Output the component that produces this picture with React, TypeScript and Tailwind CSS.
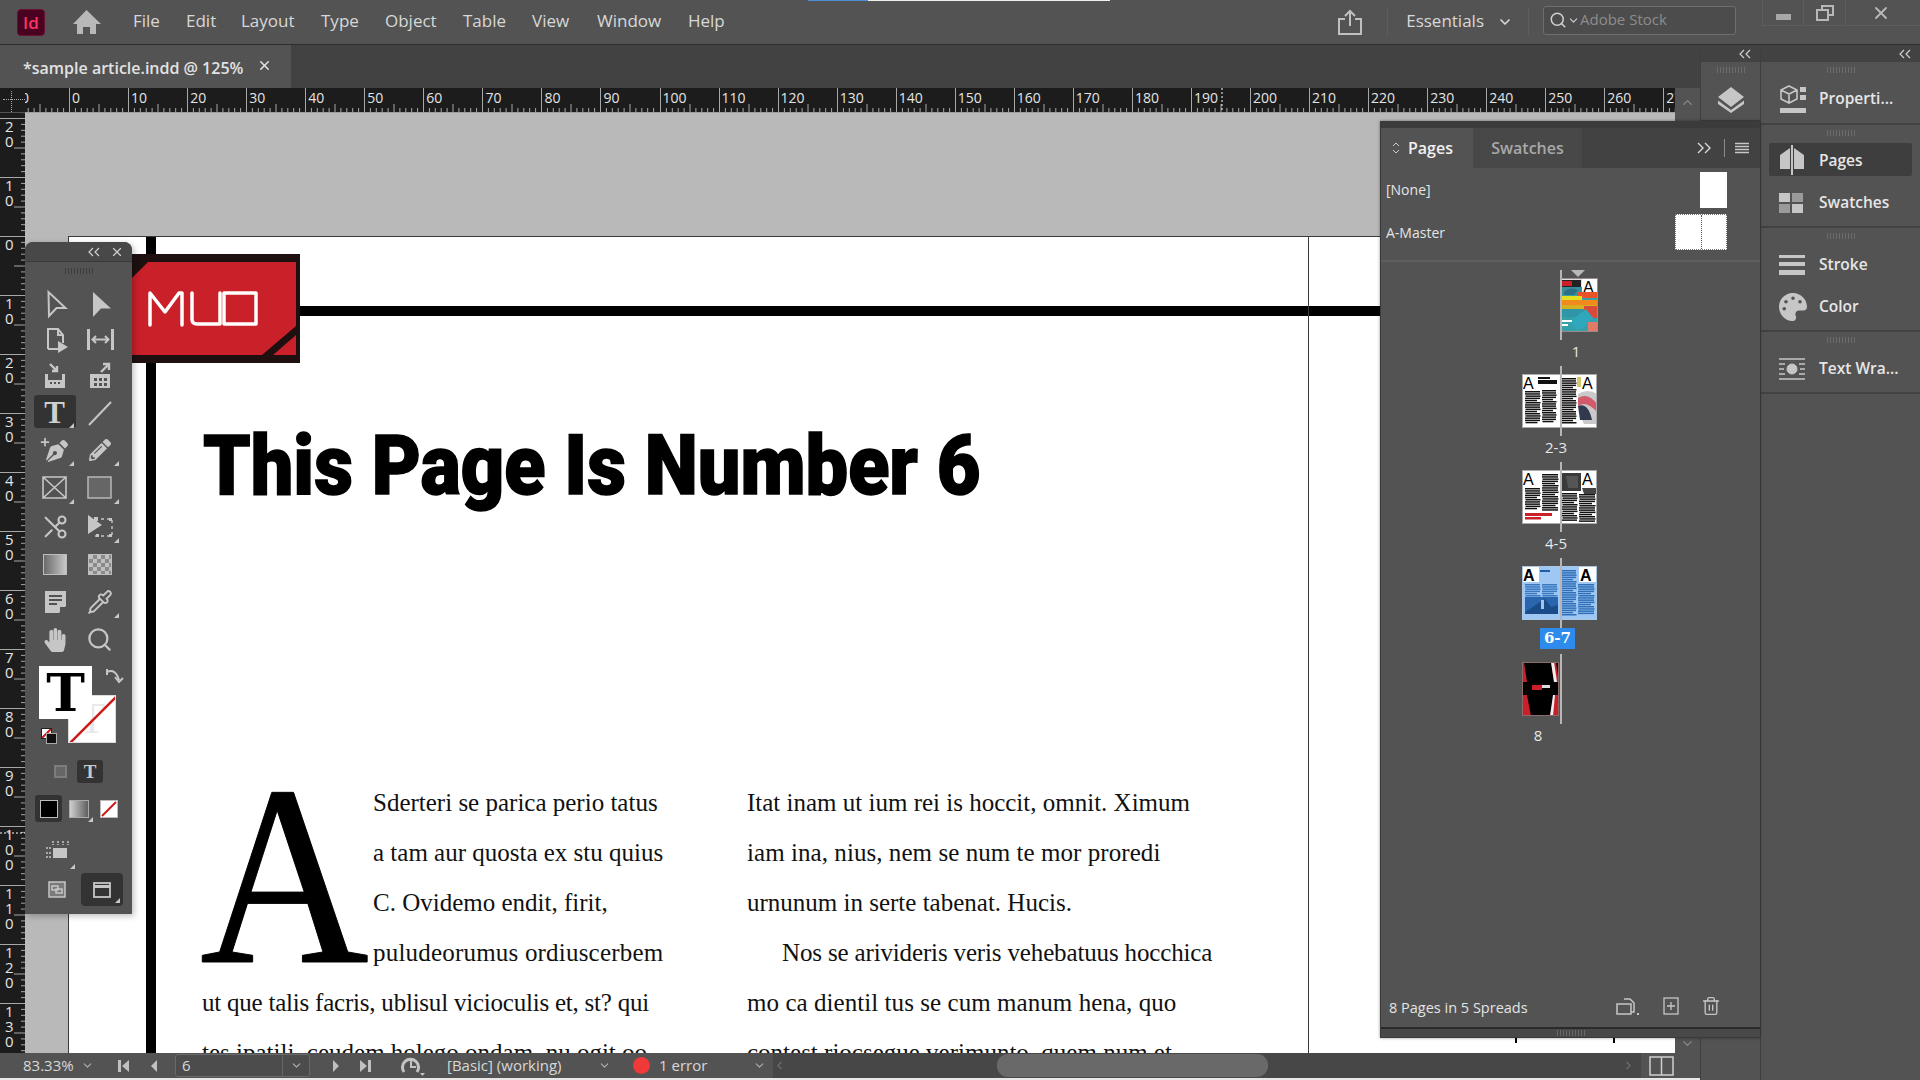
import React from "react";
import { Search, ChevronDown, ChevronUp, ChevronLeft, ChevronRight, Scissors, Pipette, Plus, Trash2, X } from "lucide-react";
import { FaPenNib, FaPencilAlt, FaHandPaper, FaPalette } from "react-icons/fa";

const Corner = () => (
  <svg width="5" height="5" viewBox="0 0 5 5" className="absolute right-[3px] bottom-[3px]"><path d="M5 0V5H0Z" fill="#c8c8c8" /></svg>
);

const HRulerSeg = ({ label, mark }: { label: string; mark?: number }) => (
  <div className="relative w-[59.05px] h-[24px] shrink-0 font-['Open_Sans',sans-serif] text-[14px] leading-[24px] text-[#e4e4e4] pl-[3px]">
    <svg width="60" height="24" className="absolute left-0 top-0">
      <line x1="0.5" y1="0" x2="0.5" y2="24" stroke="#a8a8a8" />
      {[1, 2, 3, 4, 5, 6, 7, 8, 9].map((i) => (
        <line key={i} x1={i * 5.9 + 0.5} y1={i === 5 ? 16 : 20} x2={i * 5.9 + 0.5} y2="24" stroke="#a8a8a8" />
      ))}
      {mark !== undefined && <line x1={mark} y1="0" x2={mark} y2="24" stroke="#fff" strokeDasharray="2 2" />}
    </svg>
    <span className="relative -top-[2px]">{label}</span>
  </div>
);

const VRulerSeg = ({ label, mark }: { label: string; mark?: number }) => (
  <div className="relative h-[59px] w-[25px] shrink-0 font-['Open_Sans',sans-serif] text-[15px] leading-[15px] text-[#e4e4e4] pl-[5px] pt-[1px]">
    <svg width="25" height="59" className="absolute left-0 top-0">
      <line x1="0" y1="0.5" x2="25" y2="0.5" stroke="#a8a8a8" />
      {[1, 2, 3, 4, 5, 6, 7, 8, 9].map((i) => (
        <line key={i} x1={i === 5 ? 14 : 21} y1={i * 5.9 + 0.5} x2="25" y2={i * 5.9 + 0.5} stroke="#a8a8a8" />
      ))}
      {mark !== undefined && <line x1="0" y1={mark} x2="25" y2={mark} stroke="#fff" strokeDasharray="2 2" />}
    </svg>
    <div className="relative flex flex-col">
      {label.split("").map((c, i) => (
        <span key={i}>{c}</span>
      ))}
    </div>
  </div>
);

const Ico = ({ d, fill, sw, children }: { d?: string; fill?: boolean; sw?: number; children?: React.ReactNode }) => (
  <svg width="30" height="30" viewBox="0 0 30 30" fill={fill ? "#c6c6c6" : "none"} stroke={fill ? "none" : "#c6c6c6"} strokeWidth={sw ?? 2}>
    {d && <path d={d} />}
    {children}
  </svg>
);

const Tool = ({ children, corner, active }: { children: React.ReactNode; corner?: boolean; active?: boolean }) => (
  <div className="relative w-[45px] h-full flex items-center justify-center">
    {active && <div className="absolute left-[2px] top-[0px] w-[42px] h-[33px] rounded-[3px] bg-[#333333]" />}
    <div className="relative flex items-center justify-center">{children}</div>
    {corner && <Corner />}
  </div>
);

const ToolRow = ({ h, children }: { h: string; children: React.ReactNode }) => (
  <div className={`flex pl-[7px] ${h}`}>{children}</div>
);

const ToolsPanel = () => (
  <div className="absolute left-0 top-[129px] w-[107px] h-[672px] bg-[#535353] rounded-t-[8px] flex flex-col shadow-[2px_2px_6px_rgba(0,0,0,0.25)]">
    <div className="h-[20px] shrink-0 bg-[#484848] rounded-t-[8px] border-b border-[#3a3a3a] flex items-center justify-end text-[#cfcfcf] pr-[8px] gap-[10px]">
      <svg width="12" height="10" viewBox="0 0 12 10" fill="none" stroke="#cfcfcf" strokeWidth="1.2"><path d="M5 1L1 5l4 4M11 1L7 5l4 4" /></svg>
      <X size={14} strokeWidth={2} color="#d0d0d0" />
    </div>
    <div className="h-[24px] shrink-0 flex justify-center pt-[6px]">
      <div className="w-[28px] h-[6px] bg-[repeating-linear-gradient(90deg,#3d3d3d_0,#3d3d3d_1px,transparent_1px,transparent_3px)]" />
    </div>
    <ToolRow h="h-[35px]">
      <Tool><Ico d="M8.5 3 L9 27 L16.5 19 L25.5 19 Z" /></Tool>
      <Tool><Ico fill d="M8 3 L8 28 L16 19.5 L26 19.5 Z" /></Tool>
    </ToolRow>
    <ToolRow h="h-[36px]">
      <Tool><Ico><path d="M8 25V5h10l5 6v8M8 25h11M18 5v6h5" /><path d="M18 17l10 6-10 6Z" fill="#c6c6c6" stroke="none" /></Ico></Tool>
      <Tool><Ico><path d="M3.5 5v21M27.5 5v21" strokeWidth="3" /><path d="M8 15.5h15M11 12l-3.5 3.5L11 19M20 12l3.5 3.5L20 19" /></Ico></Tool>
    </ToolRow>
    <ToolRow h="h-[38px]">
      <Tool><Ico><path d="M5 13v14h20V13h-3v6H8v-6Z" fill="#c6c6c6" stroke="none" /><path d="M10 21h2v2h-2zM14 21h2v2h-2zM18 21h2v2h-2z" fill="#535353" stroke="none" /><path d="M10 3l7 7M17 5v5h-5" strokeWidth="2.4" /></Ico></Tool>
      <Tool><Ico><path d="M5 13v14h20V13h-3v-0H8Z" fill="#c6c6c6" stroke="none" /><path d="M9 17h3v3H9zM14 17h3v3h-3zM19 17h3v3h-3zM9 22h3v3H9zM14 22h3v3h-3zM19 22h3v3h-3z" fill="#535353" stroke="none" /><path d="M16 11l8-8M18 3h6v6" strokeWidth="2.4" /></Ico></Tool>
    </ToolRow>
    <ToolRow h="h-[36px]">
      <Tool active corner><span className="font-['Liberation_Serif',serif] font-bold text-[31px] leading-[30px] text-[#d0d0d0]">T</span></Tool>
      <Tool><Ico d="M4 27 L26 4" /></Tool>
    </ToolRow>
    <ToolRow h="h-[38px]">
      <Tool corner><div className="relative w-[30px] h-[30px] flex items-center justify-center"><FaPenNib size={22} color="#c6c6c6" className="ml-[5px] mt-[2px]" /><Plus size={12} strokeWidth={3.5} color="#c6c6c6" className="absolute -left-[1px] top-[1px]" /></div></Tool>
      <Tool corner><FaPencilAlt size={22} color="#c6c6c6" /></Tool>
    </ToolRow>
    <ToolRow h="h-[38px]">
      <Tool corner><Ico sw={1.6} d="M3 4h23v21H3ZM3 4l23 21M26 4L3 25" /></Tool>
      <Tool corner><svg width="26" height="24" viewBox="0 0 26 24"><rect x="1" y="1" width="23" height="21" fill="#666" stroke="#b8b8b8" strokeWidth="1.5" /></svg></Tool>
    </ToolRow>
    <ToolRow h="h-[39px]">
      <Tool><Scissors size={28} color="#c6c6c6" strokeWidth={1.8} className="scale-x-[-1]" /></Tool>
      <Tool corner><Ico fill><path d="M3 3l14 10L3 22Z" /><path d="M10 7h17v17H10" fill="none" stroke="#c6c6c6" strokeWidth="1.4" strokeDasharray="3 3" /><path d="M9 5h4v4H9zM24 6h3v3h-3zM24 22h3v3h-3zM11 22h3v3h-3z" /></Ico></Tool>
    </ToolRow>
    <ToolRow h="h-[37px]">
      <Tool><div className="w-[24px] h-[21px] border border-[#bdbdbd] bg-[linear-gradient(90deg,#6a6a6a,#c8c8c8)]" /></Tool>
      <Tool><div className="w-[24px] h-[21px] border border-[#bdbdbd] bg-[conic-gradient(#8a8a8a_25%,#c0c0c0_0_50%,#8a8a8a_0_75%,#c0c0c0_0)] bg-[length:8px_8px]" /></Tool>
    </ToolRow>
    <ToolRow h="h-[38px]">
      <Tool><Ico fill><path d="M5 4h21v15l-7 7H5Z" /><path d="M9 9h13M9 13h13M9 17h8" stroke="#535353" strokeWidth="2" /><path d="M20 26l6-6h-6Z" fill="#535353" /></Ico></Tool>
      <Tool corner><Pipette size={26} color="#c6c6c6" strokeWidth={1.8} /></Tool>
    </ToolRow>
    <ToolRow h="h-[37px]">
      <Tool><FaHandPaper size={24} color="#c6c6c6" /></Tool>
      <Tool><Search size={27} color="#c6c6c6" strokeWidth={2} /></Tool>
    </ToolRow>
    <div className="relative h-[95px] shrink-0">
      <div className="absolute left-[43px] top-[37px] w-[48px] h-[48px] bg-white border border-[#dcdcdc] overflow-hidden flex items-center justify-center">
        <span className="font-['Liberation_Serif',serif] text-[44px] leading-[44px] text-[#e8e8e8]">T</span>
        <svg width="48" height="48" className="absolute left-0 top-0"><line x1="1" y1="47" x2="47" y2="1" stroke="#cc1a1a" strokeWidth="2.5" /></svg>
      </div>
      <div className="absolute left-[14px] top-[8px] w-[53px] h-[53px] bg-white flex items-center justify-center">
        <span className="font-['DejaVu_Serif',serif] font-bold text-[52px] leading-[50px] text-black">T</span>
      </div>
      <svg width="18" height="16" viewBox="0 0 18 16" fill="none" stroke="#c6c6c6" strokeWidth="2" className="absolute left-[81px] top-[10px]"><path d="M1 4c6-3 10 1 12 8M1 1v6M9 9l4 5 4-4" /></svg>
      <div className="absolute left-[16px] top-[70px] w-[11px] h-[11px] bg-[#fff] border border-[#222]"><svg width="9" height="9"><line x1="0" y1="9" x2="9" y2="0" stroke="#cc1a1a" strokeWidth="2" /></svg></div>
      <div className="absolute left-[21px] top-[75px] w-[11px] h-[11px] bg-[#111] border border-[#aaa]" />
    </div>
    <div className="h-[37px] shrink-0 flex items-center pl-[29px] gap-[10px]">
      <div className="w-[13px] h-[13px] border-2 border-[#7c7c7c] bg-[#666]" />
      <div className="w-[26px] h-[23px] rounded-[3px] bg-[#333] flex items-center justify-center"><span className="font-['Liberation_Serif',serif] font-bold text-[19px] leading-[19px] text-[#c8c8c8]">T</span></div>
    </div>
    <div className="h-[37px] shrink-0 flex items-center pl-[10px]">
      <div className="w-[27px] h-[27px] rounded-[3px] bg-[#333] flex items-center justify-center"><div className="w-[18px] h-[18px] bg-black border border-[#bdbdbd]" /></div>
      <div className="relative ml-[7px] w-[20px] h-[18px] border border-[#aaa] bg-[linear-gradient(90deg,#cfcfcf,#5f5f5f)]"><svg width="5" height="5" viewBox="0 0 5 5" className="absolute -right-[5px] -bottom-[5px]"><path d="M5 0V5H0Z" fill="#c8c8c8" /></svg></div>
      <div className="ml-[11px] w-[18px] h-[18px] bg-white border border-[#bbb]"><svg width="16" height="16"><line x1="1" y1="15" x2="15" y2="1" stroke="#cc1a1a" strokeWidth="2" /></svg></div>
    </div>
    <div className="relative h-[46px] shrink-0 flex items-center pl-[20px]">
      <svg width="24" height="20" viewBox="0 0 24 20"><path d="M8 8h14v10H8Z" fill="#c6c6c6" /><path d="M1 8h5M1 13h5M1 17h5M8 1v4M13 1v4M18 1v4M23 1v4" stroke="#c6c6c6" strokeWidth="1.5" strokeDasharray="2 1" /></svg>
      <svg width="5" height="5" viewBox="0 0 5 5" className="absolute left-[45px] bottom-[4px]"><path d="M5 0V5H0Z" fill="#c8c8c8" /></svg>
    </div>
    <div className="h-[33px] shrink-0 flex items-center pl-[23px] gap-[15px]">
      <svg width="18" height="17" viewBox="0 0 18 17" fill="none" stroke="#c6c6c6" strokeWidth="1.5"><rect x="1" y="1" width="16" height="15" fill="#7a7a7a" /><rect x="4" y="5" width="6" height="4" /><rect x="8" y="8" width="6" height="4" /></svg>
      <div className="relative w-[42px] h-[33px] rounded-[4px] bg-[#333] flex items-center justify-center">
        <svg width="18" height="16" viewBox="0 0 18 16" fill="none" stroke="#c6c6c6" strokeWidth="1.8"><rect x="1" y="1" width="16" height="14" /><path d="M1 4.5h16" strokeWidth="3" /></svg>
        <Corner />
      </div>
    </div>
  </div>
);

const Bars = ({ x, y, w, n, color = "#111", gap = 2.2 }: { x: number; y: number; w: number; n: number; color?: string; gap?: number }) => (
  <g>
    {Array.from({ length: n }).map((_, i) => (
      <rect key={i} x={x + (i % 3 === 2 ? 0.5 : 0)} y={y + i * gap} width={w - (i % 5 === 4 ? 3 : 0)} height={1.5} fill={color} />
    ))}
  </g>
);

const PA = ({ x, y, bold }: { x: number; y: number; bold?: boolean }) => (
  <text x={x} y={y} fontFamily="'Liberation Sans',sans-serif" fontWeight={bold ? 700 : 400} fontSize="16" fill="#000">A</text>
);

const Thumb1 = () => (
  <svg width="38" height="54" viewBox="0 0 38 54">
    <rect width="38" height="54" fill="#36a0a8" />
    <rect x="22" y="0" width="16" height="15" fill="#fff" />
    <rect x="0" y="0" width="22" height="9" fill="#ddd" /><rect x="0" y="2" width="21" height="7" fill="#222" /><rect x="1" y="3" width="11" height="5" fill="#c9202a" />
    <PA x={23} y={15} />
    <rect x="0" y="9" width="22" height="8" fill="#3a8e9c" /><path d="M4 14Q10 8 18 12L14 17H4Z" fill="#2d6f86" />
    <rect x="18" y="14" width="20" height="6" fill="#e8532a" />
    <rect x="2" y="18" width="20" height="4" fill="#e3e01f" /><rect x="0" y="22" width="38" height="5" fill="#f18a1c" />
    <rect x="0" y="27" width="38" height="4" fill="#d7b020" /><rect x="24" y="28" width="14" height="12" fill="#d94a3a" />
    <rect x="0" y="31" width="24" height="8" fill="#2f96a8" />
    <rect x="12" y="36" width="20" height="12" fill="#2fa7bd" transform="rotate(-40 22 42)" />
    <rect x="0" y="42" width="12" height="2" fill="#fff" /><rect x="0" y="46" width="8" height="2" fill="#fff" />
    <rect x="28" y="44" width="10" height="10" fill="#e27a6a" />
    <rect x="0.5" y="0.5" width="37" height="53" fill="none" stroke="#9a8a8a" />
  </svg>
);

const Thumb23 = () => (
  <svg width="75" height="54" viewBox="0 0 75 54">
    <rect width="75" height="54" fill="#fff" />
    <PA x={1} y={15} />
    <rect x="16" y="3" width="12" height="2" fill="#111" /><rect x="16" y="6" width="19" height="4" fill="#111" />
    <Bars x={3} y={17} w={15} n={15} /><Bars x={20} y={16} w={14} n={15} />
    <Bars x={39} y={4} w={15} n={21} />
    <PA x={60} y={15} />
    <rect x="55" y="3" width="4" height="10" fill="#d3c86a" />
    <path d="M56 20Q66 14 75 20V50H62Q56 40 56 20Z" fill="#c9c9c9" /><path d="M56 24Q66 18 75 30V38Q64 26 56 32Z" fill="#d25a6a" /><path d="M56 32Q66 28 70 46H58Z" fill="#32384e" />
    <rect x="0.5" y="0.5" width="74" height="53" fill="none" stroke="#aaa" />
  </svg>
);

const Thumb45 = () => (
  <svg width="75" height="54" viewBox="0 0 75 54">
    <rect width="75" height="54" fill="#fff" />
    <PA x={1} y={15} />
    <Bars x={20} y={4} w={16} n={17} /><Bars x={3} y={18} w={15} n={10} />
    <rect x="3" y="43" width="27" height="3" fill="#c9202a" /><rect x="3" y="47" width="16" height="2.5" fill="#c9202a" />
    <path d="M38 3h21v18H40Z" fill="#3a3a3a" /><path d="M44 6h12v12H46Z" fill="#555" /><path d="M60 18h14v6H62Z" fill="#444" />
    <PA x={60} y={15} />
    <Bars x={40} y={23} w={15} n={13} /><Bars x={57} y={24} w={16} n={13} />
    <rect x="0.5" y="0.5" width="74" height="53" fill="none" stroke="#aaa" />
  </svg>
);

const Thumb67 = () => (
  <svg width="75" height="54" viewBox="0 0 75 54">
    <rect width="75" height="54" fill="#9ec7f3" />
    <rect x="0" y="0" width="17" height="16" fill="#fff" /><PA x={1} y={15} bold />
    <rect x="57" y="0" width="17" height="16" fill="#fff" /><PA x={58} y={15} bold />
    <rect x="18" y="4" width="10" height="2" fill="#1f5fa8" />
    <Bars x={3} y={18} w={15} n={6} color="#3a78c0" /><Bars x={20} y={18} w={15} n={6} color="#3a78c0" />
    <rect x="3" y="31" width="33" height="17" fill="#2a66ad" /><path d="M3 46L18 36l5-3 6 8 7-2v9H3Z" fill="#1b4c8a" /><rect x="19" y="34" width="3" height="9" fill="#a0c4ea" />
    <Bars x={39} y={4} w={15} n={21} color="#2f6fb8" /><Bars x={56} y={18} w={16} n={14} color="#2f6fb8" />
    <rect x="0.5" y="0.5" width="74" height="53" fill="none" stroke="#a9c7e8" />
  </svg>
);

const Thumb8 = () => (
  <svg width="37" height="54" viewBox="0 0 37 54">
    <rect width="37" height="54" fill="#000" />
    <path d="M0 0h2l3 20H0ZM0 33h5l4 21H0Z" fill="#c9202a" />
    <path d="M29 0h5l3 20h-5ZM32 33h5v21h-9Z" fill="#c9202a" />
    <path d="M29 0h3l3 20h-3ZM28 54l3-21h2l-2 21Z" fill="#eee" />
    <rect x="10" y="23" width="10" height="5" fill="#c9202a" /><rect x="20" y="23" width="8" height="3" fill="#ddd" />
    <rect x="0.5" y="0.5" width="36" height="53" fill="none" stroke="#8a6a6a" />
  </svg>
);

const Spread = ({ children, pad, label, labelPad, active, first }: { children: React.ReactNode; pad: string; label: string; labelPad: string; active?: boolean; first?: boolean }) => (
  <div className="relative h-[96px] w-full shrink-0">
    {first && <div className="absolute left-[190px] top-0 w-0 h-0 border-l-[7px] border-r-[7px] border-t-[7px] border-l-transparent border-r-transparent border-t-[#b8b8b8]" />}
    <div className={`absolute top-[8px] ${pad}`}>{children}</div>
    <div className="absolute top-0 left-[179px] w-[2px] h-[70px] bg-[#b6b6b6]" />
    <div className={`absolute ${labelPad} h-[21px] leading-[21px] text-center z-10 ${active ? "top-[70px] bg-[#2d8ceb] text-white font-bold text-[15px] w-[35px] font-['DejaVu_Serif',serif]" : "top-[71px] text-[15px] text-[#e8e8e8] w-[40px]"}`}>{label}</div>
  </div>
);

const PagesPanel = () => (
  <div className="absolute left-[1380px] top-[8px] w-[380px] h-[917px] flex flex-col bg-[#535353] border-l border-[#3a3a3a] shadow-[0_0_3px_rgba(0,0,0,0.4)] font-['Open_Sans',sans-serif] text-[#e4e4e4] z-20">
    <div className="h-[7px] bg-[#3b3b3b] shrink-0" />
    <div className="h-[40px] shrink-0 flex bg-[#424242] items-stretch">
      <div className="w-[92px] bg-[#535353] flex items-center pl-[11px] gap-[8px] font-semibold text-[16px] text-[#f0f0f0]">
        <svg width="8" height="14" viewBox="0 0 8 14" fill="none" stroke="#cfcfcf"><path d="M1 5l3-3 3 3M1 9l3 3 3-3" /></svg>
        Pages
      </div>
      <div className="w-[109px] bg-[#484848] flex items-center justify-center font-semibold text-[16px] text-[#a8a8a8]">Swatches</div>
      <div className="flex-1 flex items-center justify-end pr-[11px]">
        <svg width="14" height="12" viewBox="0 0 14 12" fill="none" stroke="#d8d8d8" strokeWidth="1.4"><path d="M1 1l5 5-5 5M8 1l5 5-5 5" /></svg>
        <div className="w-px h-[18px] bg-[#8a8a8a] ml-[13px] mr-[10px]" />
        <svg width="14" height="12" viewBox="0 0 14 12" stroke="#c8c8c8" strokeWidth="1.4"><path d="M0 1.5h14M0 4.5h14M0 7.5h14M0 10.5h14" /></svg>
      </div>
    </div>
    <div className="h-[94px] shrink-0 relative border-b-2 border-[#5f5f5f]">
      <div className="flex items-center justify-between h-[42px] pl-[5px] pr-[33px]">
        <span className="text-[14px]">[None]</span>
        <div className="w-[27px] h-[36px] bg-white mt-[1px]" />
      </div>
      <div className="flex items-center justify-between h-[44px] pl-[5px] pr-[33px]">
        <span className="text-[14px]">A-Master</span>
        <div className="w-[52px] h-[36px] bg-white border border-dotted border-[#777] flex justify-center">
          <div className="w-px h-full border-l border-dotted border-[#555]" />
        </div>
      </div>
    </div>
    <div className="flex flex-col pt-[8px] flex-1">
      <Spread first pad="left-[179px]" label="1" labelPad="left-[175px]"><Thumb1 /></Spread>
      <Spread pad="left-[141px]" label="2-3" labelPad="left-[155px]"><Thumb23 /></Spread>
      <Spread pad="left-[141px]" label="4-5" labelPad="left-[155px]"><Thumb45 /></Spread>
      <Spread active pad="left-[141px]" label="6-7" labelPad="left-[159px]"><Thumb67 /></Spread>
      <Spread pad="left-[141px]" label="8" labelPad="left-[137px]"><Thumb8 /></Spread>
    </div>
    <div className="h-[42px] shrink-0 flex items-center pl-[8px] text-[14.5px] text-[#e4e4e4]">
      <span className="mt-[4px]">8 Pages in 5 Spreads</span>
      <svg width="26" height="20" viewBox="0 0 26 20" fill="none" stroke="#c6c6c6" strokeWidth="1.5" className="ml-[88px]"><path d="M8 3h6l4 4v9h-3M1 8h10l4 0v10H1Z" /><path d="M21 18h2" strokeWidth="2" /></svg>
      <svg width="16" height="18" viewBox="0 0 16 18" fill="none" stroke="#c6c6c6" strokeWidth="1.3" className="ml-[21px]"><rect x="1" y="1" width="14" height="16" /><path d="M8 5v8M4 9h8" /></svg>
      <Trash2 size={20} color="#c6c6c6" strokeWidth={1.6} className="ml-[22px]" />
    </div>
    <div className="h-[11px] shrink-0 bg-[#484848] border-t-2 border-[#2a2a2a] border-b border-b-[#3a3a3a] flex justify-center items-center">
      <div className="w-[28px] h-[6px] bg-[repeating-linear-gradient(90deg,#6a6a6a_0,#6a6a6a_1px,transparent_1px,transparent_3px)]" />
    </div>
  </div>
);

const Grip = () => (
  <div className="h-[16px] flex justify-center items-center shrink-0">
    <div className="w-[28px] h-[6px] bg-[repeating-linear-gradient(90deg,#6c6c6c_0,#6c6c6c_1px,transparent_1px,transparent_3px)]" />
  </div>
);

const DockItem = ({ icon, label, h, active }: { icon: React.ReactNode; label: string; h: string; active?: boolean }) => (
  <div className={`flex items-center ${h} mx-[8px] shrink-0 rounded-[2px] ${active ? "bg-[#3e3e3e] mt-[2px]" : ""}`}>
    <div className="w-[50px] pl-[10px] flex items-center shrink-0">{icon}</div>
    <span className={`font-semibold text-[15.5px] text-[#e6e6e6] whitespace-nowrap ${active ? "mt-[3px]" : ""}`}>{label}</span>
  </div>
);

const Group = ({ h, children }: { h: string; children: React.ReactNode }) => (
  <div className={`${h} shrink-0 border-b-2 border-[#424242] flex flex-col`}>
    <Grip />
    {children}
  </div>
);

export default function App() {
  const hLabels = ["10", ...Array.from({ length: 28 }, (_, i) => String(i * 10))];
  const vLabels = ["30", "20", "10", "0", "10", "20", "30", "40", "50", "60", "70", "80", "90", "100", "110", "120", "130", "140"];
  return (
    <div className="w-[1920px] h-[1080px] flex flex-col overflow-hidden bg-[#535353] font-['Open_Sans',sans-serif] relative">
      {/* title bar */}
      <div className="relative h-[45px] shrink-0 bg-[#535353] border-b border-[#2e2e2e] flex items-center">
        <div className="absolute left-[808px] top-0 w-[60px] h-[1px] bg-[#4b8fd6]" />
        <div className="absolute left-[868px] top-0 w-[242px] h-[1px] bg-[#f0f0f0]" />
        <div className="ml-[17px] w-[28px] h-[27px] rounded-[4px] bg-[#49021f] border border-[#6a1030] flex items-center justify-center text-[#ff3366] text-[17px] font-semibold leading-none">Id</div>
        <svg width="28" height="24" viewBox="0 0 28 24" fill="#b8b8b8" className="ml-[28px]"><path d="M13.5 0L0 14h4v10h6v-7h7v7h6V14h5Z" /></svg>
        <div className="absolute left-0 -top-[1px] h-[44px] flex items-center text-[17px] text-[#d8d8d8]">
          <span className="ml-[133px] w-[53px]">File</span>
          <span className="w-[55px]">Edit</span>
          <span className="w-[80px]">Layout</span>
          <span className="w-[64px]">Type</span>
          <span className="w-[78px]">Object</span>
          <span className="w-[69px]">Table</span>
          <span className="w-[65px]">View</span>
          <span className="w-[91px]">Window</span>
          <span>Help</span>
        </div>
        <div className="ml-auto flex items-center h-[44px]">
          <svg width="24" height="26" viewBox="0 0 24 26" fill="none" stroke="#c0c0c0" strokeWidth="2"><path d="M7 10H1v15h22V10h-6M12 17V2M7 7l5-5 5 5" /></svg>
          <div className="w-px h-[28px] bg-[#5e5e5e] ml-[25px]" />
          <span className="ml-[18px] text-[17px] text-[#d8d8d8] -mt-[3px]">Essentials</span>
          <ChevronDown size={16} color="#d8d8d8" strokeWidth={2.5} className="ml-[13px]" />
          <div className="w-px h-[28px] bg-[#5e5e5e] ml-[15px]" />
          <div className="ml-[14px] w-[193px] h-[29px] rounded-[3px] bg-[#4c4c4c] border border-[#6e6e6e] flex items-center pl-[5px] text-[15px] text-[#8c8c8c] -mt-[4px]">
            <Search size={18} color="#cfcfcf" strokeWidth={2} />
            <ChevronDown size={13} color="#cfcfcf" strokeWidth={2} />
            <span className="-mt-[2px]">Adobe Stock</span>
          </div>
          <div className="ml-[26px] w-[158px] h-[26px] self-start border-l border-b border-[#5d5d5d] flex items-center text-[#b8b8b8]">
            <div className="w-[41px] h-full border-r border-[#5d5d5d] flex items-end justify-center pb-[5px]"><div className="w-[15px] h-[6px] bg-[#a8a8a8]" /></div>
            <div className="w-[42px] h-full border-r border-[#5d5d5d] flex items-center justify-center">
              <svg width="18" height="16" viewBox="0 0 18 16" fill="none" stroke="#b8b8b8" strokeWidth="2"><rect x="1" y="5" width="11" height="10" /><path d="M6 5V1h11v9h-5" /></svg>
            </div>
            <div className="flex-1 flex justify-center pr-[4px]"><X size={20} strokeWidth={2.2} color="#b8b8b8" /></div>
          </div>
        </div>
      </div>

      <div className="flex flex-1 min-h-0">
        {/* left workspace */}
        <div className="w-[1700px] shrink-0 flex flex-col">
          <div className="h-[43px] shrink-0 bg-[#424242] flex">
            <div className="w-[291px] bg-[#535353] flex items-center pl-[23px] pt-[2px] text-[16px] font-semibold text-[#e2e2e2]">
              *sample article.indd @ 125%
              <X size={15} strokeWidth={2.5} color="#e2e2e2" className="ml-[14px] -mt-[5px]" />
            </div>
            <div className="flex-1" />
          </div>
          <div className="h-[25px] shrink-0 flex">
            <div className="w-[25px] h-[24px] bg-[#1c1c1c] relative shrink-0">
              <div className="absolute left-[3px] top-[11px] w-[22px] border-t border-dotted border-[#aaa]" />
              <div className="absolute left-[11px] top-[3px] h-[21px] border-l border-dotted border-[#aaa]" />
            </div>
            <div className="w-[1650px] h-[25px] bg-[#1c1c1c] border-b border-[#a0a0a0] overflow-hidden shrink-0">
              <div className="flex -ml-[15px]">
                {hLabels.map((l, i) => (
                  <HRulerSeg key={i} label={l} mark={l === "190" ? 31 : undefined} />
                ))}
              </div>
            </div>
            <div className="flex-1 flex justify-center pt-[7px]"><ChevronUp size={15} color="#8a8a8a" /></div>
          </div>
          <div className="flex-1 flex min-h-0 relative">
            <div className="w-[25px] shrink-0 bg-[#1c1c1c] overflow-hidden">
              <div className="-mt-[54px] flex flex-col">
                {vLabels.map((l, i) => (
                  <VRulerSeg key={i} label={l} mark={i === 13 ? 7 : undefined} />
                ))}
              </div>
            </div>
            {/* pasteboard */}
            <div className="w-[1650px] shrink-0 bg-[#b9b9b9] overflow-hidden pt-[123px] pl-[43px]">
              <div className="relative w-[1700px] h-[1000px] bg-white border-t border-l border-[#3a3a3a]">
                <div className="absolute left-[77px] top-0 w-[10px] h-full bg-black" />
                <div className="absolute left-[1239px] top-0 w-px h-full bg-[#3a3a3a] z-10" />
                <div className="absolute left-[1446px] top-[798px] w-[2px] h-[8px] bg-black" />
                <div className="absolute left-[1544px] top-[798px] w-[2px] h-[8px] bg-black" />
                <div className="relative flex pt-[17px] pl-[63px]">
                  <svg width="168" height="109" viewBox="0 0 168 109" className="shrink-0">
                    <rect width="168" height="109" fill="#1e1010" />
                    <path d="M0 24L16 8H164V72L130 101H0Z" fill="#c9202a" />
                    <path d="M164 81V101H141Z" fill="#c9202a" />
                    <path d="M18 71V39L33 58L47 39H50V71M60 39V65Q60 70 65 70H88V39M92 39H124V70H92Z" fill="none" stroke="#fff" strokeWidth="3.5" strokeLinejoin="round" strokeLinecap="round" />
                  </svg>
                  <div className="flex-1 h-[10px] bg-black mt-[52px]" />
                </div>
                <div className="pl-[134px] pt-[53px] h-[415px]">
                  <div className="font-['Roboto',sans-serif] font-black text-[84px] leading-[100px] text-black whitespace-nowrap origin-left scale-x-[0.9] [-webkit-text-stroke:1.5px_#000]">This Page Is Number 6</div>
                </div>
                <div className="flex pl-[133px] font-['Liberation_Serif',serif] text-[25px] leading-[50px] text-[#111]">
                  <div className="w-[545px] shrink-0">
                    <div className="float-left w-[171px] h-[200px] text-[257px] leading-[200px] text-black"><div className="relative -top-[2px] -left-[2px] origin-left scale-x-[0.91] [-webkit-text-stroke:1px_#000]">A</div></div>
                    <div className="whitespace-nowrap">Sderteri se parica perio tatus</div>
                    <div className="whitespace-nowrap">a tam aur quosta ex stu quius</div>
                    <div className="whitespace-nowrap">C. Ovidemo endit, firit,</div>
                    <div className="whitespace-nowrap tracking-[0.2px]">puludeorumus ordiuscerbem</div>
                    <div className="clear-both whitespace-nowrap tracking-[-0.22px]">ut que talis facris, ublisul vicioculis et, st? qui</div>
                    <div className="whitespace-nowrap">tes ipatili, ceudem holego ondam, nu ogit oo</div>
                  </div>
                  <div className="w-[500px]">
                    <div className="whitespace-nowrap">Itat inam ut ium rei is hoccit, omnit. Ximum</div>
                    <div className="whitespace-nowrap tracking-[0.06px]">iam ina, nius, nem se num te mor proredi</div>
                    <div className="whitespace-nowrap">urnunum in serte tabenat. Hucis.</div>
                    <div className="whitespace-nowrap pl-[35px] tracking-[-0.15px]">Nos se arivideris veris vehebatuus hocchica</div>
                    <div className="whitespace-nowrap tracking-[0.06px]">mo ca dientil tus se cum manum hena, quo</div>
                    <div className="whitespace-nowrap">contest riocsegue verimunto, quem num et</div>
                  </div>
                </div>
              </div>
            </div>
            <div className="flex-1 flex flex-col justify-end items-center pb-[2px]"><ChevronDown size={15} color="#8a8a8a" /></div>
            <ToolsPanelWrap />
            <PagesPanel />
          </div>
          {/* status bar */}
          <div className="h-[25px] shrink-0 bg-[#535353] flex items-center text-[15px] text-[#d8d8d8]">
            <span className="ml-[23px] w-[58px]">83.33%</span>
            <ChevronDown size={13} color="#b0b0b0" />
            <svg width="14" height="14" viewBox="0 0 14 14" fill="#c0c0c0" className="ml-[23px]"><path d="M1 1h3v12H1ZM12 1v12L5 7Z" /></svg>
            <svg width="8" height="14" viewBox="0 0 8 14" fill="#c0c0c0" className="ml-[19px]"><path d="M7 1v12L1 7Z" /></svg>
            <div className="ml-[17px] w-[135px] h-[23px] rounded-[3px] bg-[#4c4c4c] border border-[#6a6a6a] flex items-center pl-[6px] shrink-0">
              <span className="flex-1">6</span>
              <div className="w-[27px] h-full border-l border-[#666] flex items-center justify-center"><ChevronDown size={13} color="#b0b0b0" /></div>
            </div>
            <svg width="8" height="14" viewBox="0 0 8 14" fill="#c0c0c0" className="ml-[22px]"><path d="M1 1v12l6-6Z" /></svg>
            <svg width="14" height="14" viewBox="0 0 14 14" fill="#c0c0c0" className="ml-[18px]"><path d="M2 1v12l7-6ZM10 1h3v12h-3Z" /></svg>
            <svg width="26" height="22" viewBox="0 0 26 22" fill="none" stroke="#c4c4c4" className="ml-[29px]"><path d="M3 17A8 8 0 1 1 16 17" strokeWidth="3" /><path d="M10 5v7h5" strokeWidth="2" /><path d="M19 18h5l-2.5 3Z" fill="#c4c4c4" stroke="none" /></svg>
            <span className="ml-[20px] w-[151px] whitespace-nowrap">[Basic] (working)</span>
            <ChevronDown size={13} color="#b0b0b0" />
            <div className="ml-[22px] w-[17px] h-[17px] rounded-full bg-[#f03a3a]" />
            <span className="ml-[9px] w-[94px]">1 error</span>
            <ChevronDown size={13} color="#b0b0b0" />
            <div className="ml-[7px] flex-1 h-full bg-[#474747] flex items-center min-w-0">
              <ChevronLeft size={13} color="#6f6f6f" />
              <div className="ml-[211px] w-[271px] h-[23px] rounded-[11px] bg-[#696969]" />
              <div className="flex-1" />
              <ChevronRight size={13} color="#6f6f6f" />
              <div className="w-[6px]" />
            </div>
            <div className="w-[59px] shrink-0 flex items-center pl-[8px]">
              <svg width="25" height="20" viewBox="0 0 25 20" fill="none" stroke="#cfcfcf" strokeWidth="1.5"><rect x="1" y="1" width="23" height="18" /><path d="M12.5 1v18" /></svg>
            </div>
          </div>
          <div className="h-[2px] shrink-0 bg-[#e8e8e8]" />
        </div>

        {/* narrow dock */}
        <div className="w-[60px] shrink-0 border-l border-[#3f3f3f] flex flex-col">
          <div className="h-[17px] bg-[#424242] shrink-0 flex items-center justify-center pl-[28px]">
            <svg width="12" height="10" viewBox="0 0 12 10" fill="none" stroke="#cfcfcf" strokeWidth="1.2"><path d="M5 1L1 5l4 4M11 1L7 5l4 4" /></svg>
          </div>
          <div className="h-[59px] shrink-0 flex flex-col border-b border-[#424242]">
            <Grip />
            <div className="flex justify-center pt-[9px]">
              <svg width="26" height="26" viewBox="0 0 26 26" fill="#c6c6c6"><path d="M13 0L26 10 13 20 0 10Z" /><path d="M0 17L13 26 26 17 26 13.5 13 23 0 13.5Z" /></svg>
            </div>
          </div>
        </div>

        {/* right dock */}
        <div className="w-[160px] shrink-0 border-l border-[#3f3f3f] flex flex-col">
          <div className="h-[17px] bg-[#424242] shrink-0 flex items-center justify-end pr-[9px]">
            <svg width="12" height="10" viewBox="0 0 12 10" fill="none" stroke="#cfcfcf" strokeWidth="1.2"><path d="M5 1L1 5l4 4M11 1L7 5l4 4" /></svg>
          </div>
          <Group h="h-[63px]">
            <DockItem h="h-[42px]" label="Properti..." icon={
              <svg width="28" height="30" viewBox="0 0 28 30" fill="none" stroke="#c6c6c6" strokeWidth="1.6"><path d="M10 2l8 4v9l-8 4-8-4V6ZM2 6l8 4 8-4M10 10v9" /><path d="M21 3h6v5h-6ZM21 11h6v5h-6ZM1 24h26v5H1Z" fill="#c6c6c6" stroke="none" /></svg>
            } />
          </Group>
          <Group h="h-[103px]">
            <DockItem active h="h-[33px]" label="Pages" icon={
              <svg width="26" height="30" viewBox="0 0 26 30" fill="#c6c6c6"><path d="M1 24V10l10-7v21ZM25 24V10L15 3v21Z" /><rect x="12" y="0" width="2" height="30" /></svg>
            } />
            <DockItem h="h-[54px]" label="Swatches" icon={
              <svg width="24" height="20" viewBox="0 0 24 20" fill="#c6c6c6"><rect width="11" height="9" /><rect x="13" width="11" height="9" fill="#9a9a9a" /><rect y="11" width="11" height="9" fill="#9a9a9a" /><rect x="13" y="11" width="11" height="9" /></svg>
            } />
          </Group>
          <Group h="h-[104px]">
            <DockItem h="h-[42px]" label="Stroke" icon={
              <svg width="26" height="20" viewBox="0 0 26 20" fill="#c6c6c6"><rect y="0" width="26" height="3" /><rect y="7" width="26" height="4" /><rect y="15" width="26" height="5" /></svg>
            } />
            <DockItem h="h-[42px]" label="Color" icon={<FaPalette size={28} color="#c6c6c6" />} />
          </Group>
          <Group h="h-[62px]">
            <DockItem h="h-[42px]" label="Text Wra..." icon={
              <svg width="26" height="22" viewBox="0 0 26 22" fill="#c6c6c6" stroke="#c6c6c6"><circle cx="13" cy="11" r="5" /><path d="M0 1h26M0 21h26M0 6h6M20 6h6M0 11h5M21 11h5M0 16h6M20 16h6" strokeWidth="1.4" /></svg>
            } />
          </Group>
        </div>
      </div>
    </div>
  );
}

const ToolsPanelWrap = () => (
  <div className="absolute left-[25px] top-0 z-10 text-[#ddd]">
    <ToolsPanel />
  </div>
);
